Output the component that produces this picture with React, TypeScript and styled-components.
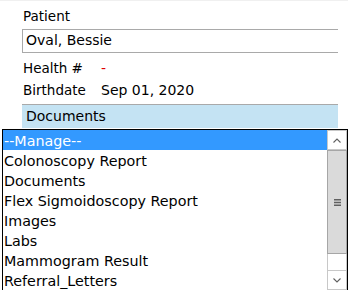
import styled, { createGlobalStyle } from "styled-components";

const GlobalStyle = createGlobalStyle`
  body {
    margin: 0;
    background: #fff;
    font-family: "DejaVu Sans", Verdana, sans-serif;
    color: #000;
  }
`;

const Page = styled.div`
  position: relative;
  width: 348px;
  height: 290px;
  overflow: hidden;
  border-top: 1px solid #f0f0f0;
  box-sizing: border-box;
`;

const Form = styled.div`
  padding: 0 10px 0 22px;
`;

const FieldLabel = styled.div`
  height: 28px;
  padding: 7px 0 0 1px;
  box-sizing: border-box;
  font-size: 13.5px;
  line-height: 16px;
`;

const TextBox = styled.div`
  height: 24px;
  border: 1px solid #a9a9a9;
  border-right: none;
  box-sizing: border-box;
  padding: 2px 3px 0;
  font-size: 14px;
  line-height: 17px;
`;

const InfoGrid = styled.div`
  display: grid;
  grid-template-columns: 78px 1fr;
  grid-auto-rows: 22px;
  align-items: baseline;
  padding: 7px 0 0 1px;
  font-size: 13.5px;
  line-height: 16px;
`;

const Value = styled.span<{ $missing?: boolean }>`
  font-size: 14px;
  color: ${({ $missing }) => ($missing ? "#e00000" : "#000")};
`;

const SelectBox = styled.div`
  height: 24px;
  background: #c4e3f3;
  border-top: 1px solid #a9a9a9;
  box-sizing: border-box;
  padding: 3px 4px 0;
  font-size: 14px;
  line-height: 17px;
`;

const DropList = styled.div`
  position: absolute;
  left: 2px;
  top: 128px;
  width: 346px;
  height: 162px;
  border: 1px solid #000;
  box-sizing: border-box;
  display: flex;
  background: #fff;
`;

const Options = styled.ul`
  flex: 1;
  margin: 0;
  padding: 0;
  list-style: none;
`;

const Option = styled.li<{ $selected?: boolean }>`
  height: 20px;
  padding: 3px 0 0 1px;
  box-sizing: border-box;
  font-size: 14.3px;
  line-height: 17px;
  white-space: nowrap;
  background: ${({ $selected }) => ($selected ? "#3399ff" : "transparent")};
  color: ${({ $selected }) => ($selected ? "#fff" : "#000")};
`;

const Scrollbar = styled.div`
  width: 20px;
  display: flex;
  flex-direction: column;
  background: #fff;
`;

const ArrowButton = styled.div`
  height: 20px;
  border: 1px solid #c8c8c8;
  box-sizing: border-box;
  display: flex;
  align-items: center;
  justify-content: center;
`;

const Thumb = styled.div`
  height: 104px;
  background: #dadada;
  border: 1px solid #a6a6a6;
  box-sizing: border-box;
  display: flex;
  align-items: center;
  justify-content: center;
`;

const Track = styled.div`
  flex: 1;
  border-left: 1px solid #c8c8c8;
  border-right: 1px solid #c8c8c8;
`;

const items = [
  "Colonoscopy Report",
  "Documents",
  "Flex Sigmoidoscopy Report",
  "Images",
  "Labs",
  "Mammogram Result",
  "Referral_Letters",
];

function Chevron({ up }: { up?: boolean }) {
  return (
    <svg width="8" height="5" viewBox="0 0 8 5">
      <path
        d={up ? "M0.5 4.5 L4 1 L7.5 4.5" : "M0.5 0.5 L4 4 L7.5 0.5"}
        fill="none"
        stroke="#606060"
        strokeWidth="1.1"
      />
    </svg>
  );
}

function Grip() {
  return (
    <svg width="7" height="7" viewBox="0 0 7 7">
      <rect x="0" y="0" width="7" height="1.5" fill="#606060" />
      <rect x="0" y="2.75" width="7" height="1.5" fill="#606060" />
      <rect x="0" y="5.5" width="7" height="1.5" fill="#606060" />
    </svg>
  );
}

export default function App() {
  return (
    <Page>
      <GlobalStyle />
      <Form>
        <FieldLabel>Patient</FieldLabel>
        <TextBox>Oval, Bessie</TextBox>
        <InfoGrid>
          <span>Health #</span>
          <Value $missing>-</Value>
          <span>Birthdate</span>
          <Value>Sep 01, 2020</Value>
        </InfoGrid>
        <SelectBox>Documents</SelectBox>
      </Form>

      <DropList role="listbox">
        <Options>
          <Option $selected>--Manage--</Option>
          {items.map((item) => (
            <Option key={item}>{item}</Option>
          ))}
        </Options>
        <Scrollbar>
          <ArrowButton>
            <Chevron up />
          </ArrowButton>
          <Thumb>
            <Grip />
          </Thumb>
          <Track />
          <ArrowButton>
            <Chevron />
          </ArrowButton>
        </Scrollbar>
      </DropList>
    </Page>
  );
}
